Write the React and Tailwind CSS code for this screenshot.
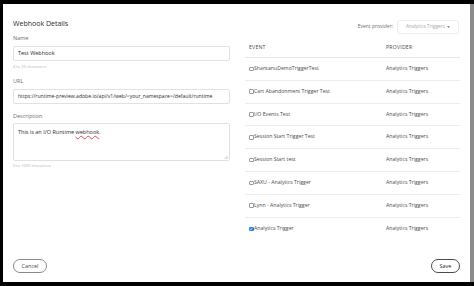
import React from "react";

const rows = [
  { name: "ShantanuDemoTriggerTest", checked: false },
  { name: "Cart Abandonment Trigger Test", checked: false },
  { name: "I/O Events Test", checked: false },
  { name: "Session Start Trigger Test", checked: false },
  { name: "Session Start test", checked: false },
  { name: "SAXU - Analytics Trigger", checked: false },
  { name: "Lynn - Analytics Trigger", checked: false },
  { name: "Analytics Trigger", checked: true },
];

function Checkbox({ checked }) {
  if (checked) {
    return (
      <span className="w-[4.5px] h-[4.5px] rounded-[1px] bg-[#2680eb] flex items-center justify-center shrink-0">
        <svg width="4" height="4" viewBox="0 0 4 4">
          <path d="M0.6 2.1 L1.6 3 L3.4 0.9" stroke="white" strokeWidth="0.7" fill="none" />
        </svg>
      </span>
    );
  }
  return <span className="w-[4.5px] h-[4.5px] rounded-[1px] border-[0.6px] border-[#9a9a9a] bg-white shrink-0" />;
}

export default function App() {
  return (
    <div
      className="w-[474px] h-[286px] bg-black flex flex-col overflow-hidden"
      style={{ fontFamily: '"Open Sans", "Noto Sans", sans-serif' }}
    >
      <div className="h-[4px] shrink-0" />
      <div className="flex h-[278px] shrink-0">
        <div className="w-[3px] bg-black shrink-0" />
        <div className="flex-1 bg-white flex pl-[10px] pr-[10px] pt-[15px] pb-[9px] gap-[15px]">
          {/* Left column */}
          <div className="w-[217px] flex flex-col">
            <div className="text-[7px] leading-[10px] text-[#2c2c2c]">Webhook Details</div>
            <div className="mt-[5px] text-[5.5px] leading-[8px] text-[#6e6e6e]">Name</div>
            <div className="mt-[4px] h-[15px] border border-[#e1e1e1] rounded-[2px] flex items-center px-[4px] text-[5.5px] text-[#2c2c2c]">
              Test Webhook
            </div>
            <div className="mt-[3px] text-[4px] leading-[6px] text-[#b3b3b3]">4 to 25 characters</div>
            <div className="mt-[7px] text-[5.5px] leading-[8px] text-[#6e6e6e]">URL</div>
            <div className="mt-[4px] h-[15px] border border-[#e1e1e1] rounded-[2px] flex items-center px-[4px] text-[5.1px] text-[#2c2c2c] whitespace-nowrap overflow-hidden">
              https://runtime-preview.adobe.io/api/v1/web/&lt;your_namespace&gt;/default/runtime
            </div>
            <div className="mt-[8px] text-[5.5px] leading-[8px] text-[#6e6e6e]">Description</div>
            <div className="mt-[3px] h-[38px] border border-[#e1e1e1] rounded-[2px] relative px-[4px] pt-[4px] text-[5.5px] leading-[8px] text-[#2c2c2c]">
              This is an I/O Runtime{" "}
              <span className="underline decoration-wavy decoration-[#e34850] decoration-[0.5px]">webhook</span>.
              <svg className="absolute right-[1px] bottom-[1px]" width="4" height="4" viewBox="0 0 4 4">
                <path d="M4 0.5 L0.5 4 M4 2.2 L2.2 4" stroke="#9a9a9a" strokeWidth="0.5" />
              </svg>
            </div>
            <div className="mt-[2px] text-[4px] leading-[6px] text-[#b3b3b3]">0 to 1000 characters</div>
            <div className="mt-auto">
              <button className="w-[34px] h-[14px] rounded-full border-[1.2px] border-[#8a8a8a] text-[5.5px] text-[#4b4b4b] flex items-center justify-center">
                Cancel
              </button>
            </div>
          </div>
          {/* Right column */}
          <div className="flex-1 flex flex-col">
            <div className="flex items-center justify-end gap-[4px] mt-[1px] pr-[1px]">
              <span className="text-[5px] text-[#6e6e6e]">Event provider:</span>
              <div className="h-[14px] w-[62px] border border-[#eeeeee] rounded-[2px] flex items-center justify-center gap-[2px] whitespace-nowrap text-[4.8px] text-[#a8a8a8]">
                <span>Analytics Triggers</span>
                <svg width="3" height="2" viewBox="0 0 3 2">
                  <path d="M0 0 L3 0 L1.5 2 Z" fill="#8a8a8a" />
                </svg>
              </div>
            </div>
            <div className="mt-[5px] h-[19px] flex items-center border-b border-[#e6e6e6] text-[5.2px] text-[#4b4b4b] tracking-[0.2px]">
              <div className="w-[141px] pl-[4px]">EVENT</div>
              <div className="flex-1">PROVIDER</div>
            </div>
            {rows.map((r, i) => (
              <div
                key={r.name}
                className={
                  "h-[22.8px] flex items-center text-[5.2px] text-[#4b4b4b] " +
                  (i < rows.length - 1 ? "border-b border-[#ececec]" : "")
                }
              >
                <div className="w-[141px] pl-[4px] flex items-center gap-[0.5px]">
                  <Checkbox checked={r.checked} />
                  <span>{r.name}</span>
                </div>
                <div className="flex-1">Analytics Triggers</div>
              </div>
            ))}
            <div className="mt-auto flex justify-end">
              <button className="w-[29px] h-[14px] rounded-full border-[1.2px] border-[#4b4b4b] text-[5.5px] text-[#2c2c2c] flex items-center justify-center">
                Save
              </button>
            </div>
          </div>
        </div>
        <div className="w-[4px] bg-[#8c8c8c] shrink-0" />
      </div>
      <div className="h-[4px] shrink-0" />
    </div>
  );
}
